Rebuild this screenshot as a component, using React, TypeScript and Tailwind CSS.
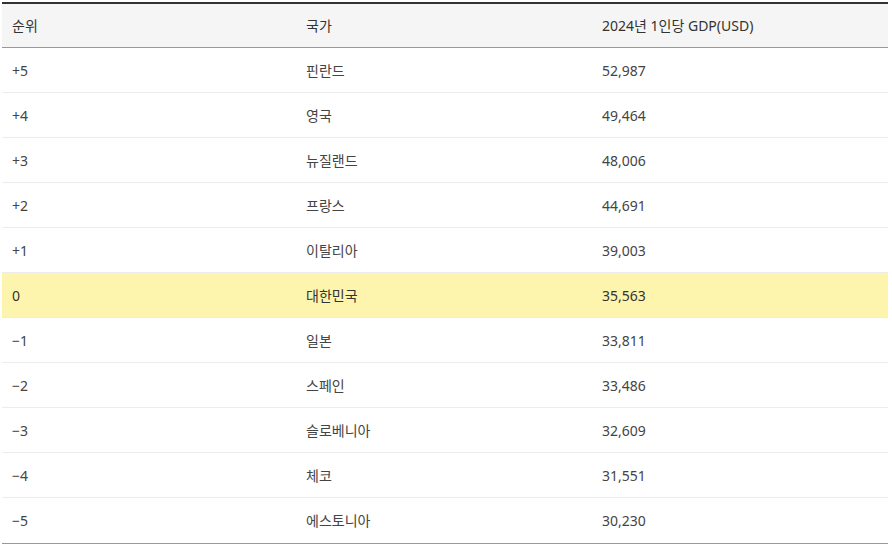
const rows: [string, string, string][] = [
  ["+5", "핀란드", "52,987"],
  ["+4", "영국", "49,464"],
  ["+3", "뉴질랜드", "48,006"],
  ["+2", "프랑스", "44,691"],
  ["+1", "이탈리아", "39,003"],
  ["0", "대한민국", "35,563"],
  ["−1", "일본", "33,811"],
  ["−2", "스페인", "33,486"],
  ["−3", "슬로베니아", "32,609"],
  ["−4", "체코", "31,551"],
  ["−5", "에스토니아", "30,230"],
];

export default function App() {
  return (
    <div className="bg-white w-[892px] h-[548px] pt-[2px] pl-[2px]" style={{ fontFamily: '"Noto Sans", "Noto Sans CJK KR", sans-serif' }}>
      <div className="w-[886px] border-t-2 border-[#333] border-b border-b-[#999] text-[14px] text-[#444]">
        <div className="grid grid-cols-[294px_296px_296px] h-[44px] items-center bg-[#f5f5f5] border-b border-[#999] text-[#333]">
          <div className="pl-[10px]">순위</div>
          <div className="pl-[10px]">국가</div>
          <div className="pl-[10px]">2024년 1인당 GDP(USD)</div>
        </div>
        {rows.map((r, i) => (
          <div
            key={i}
            className={
              "grid grid-cols-[294px_296px_296px] h-[45px] items-center " +
              (i < rows.length - 1 ? "border-b border-[#ececec] " : "") +
              (r[0] === "0" ? "bg-[#fdf5ae] text-[#333]" : "")
            }
          >
            <div className="pl-[10px]">{r[0]}</div>
            <div className="pl-[10px]">{r[1]}</div>
            <div className="pl-[10px]">{r[2]}</div>
          </div>
        ))}
      </div>
    </div>
  );
}
